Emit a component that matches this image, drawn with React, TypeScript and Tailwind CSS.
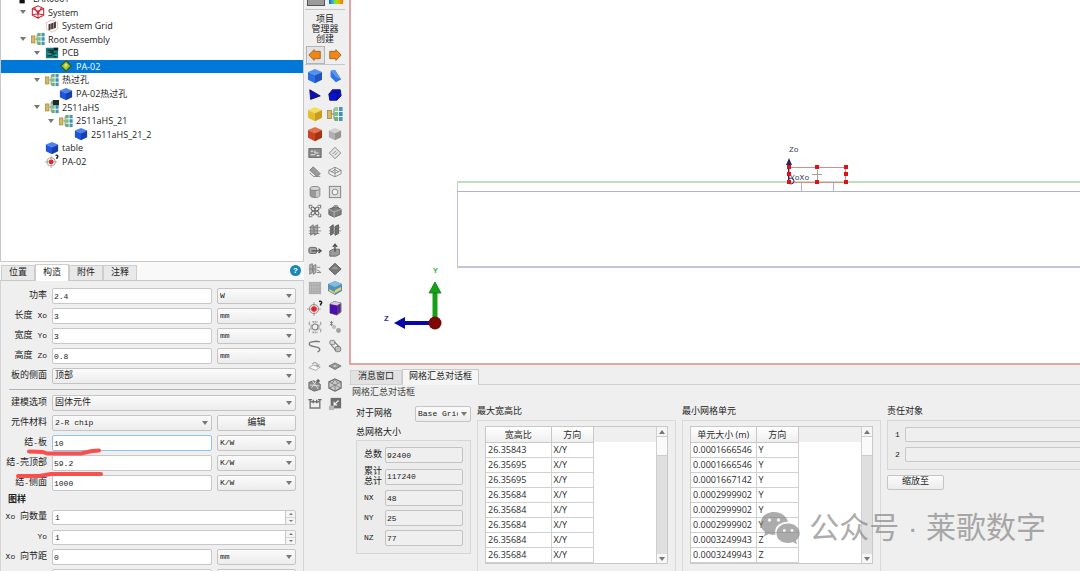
import React from 'react';

type IconProps = { className?: string };

const Svg = ({ children, className = 'w-3.5 h-3.5' }: { children: React.ReactNode; className?: string }) => (
  <svg viewBox="0 0 16 16" className={`shrink-0 ${className}`} fill="none" aria-hidden="true">
    {children}
  </svg>
);

/* ---------- icons ---------- */

const Cube = ({ top, left, right, className }: { top: string; left: string; right: string; className?: string }) => (
  <Svg className={className}>
    <path d="M8 1L15 4L8 7.2L1 4Z" fill={top} />
    <path d="M1 4L8 7.2V15.2L1 11.8Z" fill={left} />
    <path d="M15 4L8 7.2V15.2L15 11.8Z" fill={right} />
  </Svg>
);

const BlueCube = ({ className }: IconProps) => <Cube top="#4c83ee" left="#1f55d8" right="#163fae" className={className} />;

const AssemblyIcon = ({ className, muted, chip }: IconProps & { muted?: boolean; chip?: boolean }) => (
  <Svg className={className}>
    <rect x="0.5" y="4.5" width="4" height="8" fill="#d9b95c" stroke="#9d8540" strokeWidth="0.8" />
    <path d="M5 8H7M7 3V13M7 3H8M7 13H8" stroke="#5a8d6c" strokeWidth="1" />
    <rect x="7.5" y="1" width="3.6" height="4" fill={muted ? '#9fc79d' : '#6fae74'} />
    <rect x="7.5" y="6" width="3.6" height="4" fill="#82b98a" />
    <rect x="7.5" y="11" width="3.6" height="4" fill="#6fae74" />
    <rect x="12" y="1" width="3.6" height="4" fill="#4c94b8" />
    <rect x="12" y="6" width="3.6" height="4" fill="#3f8fb0" />
    <rect x="12" y="11" width="3.6" height="4" fill="#4c94b8" />
    {chip && <rect x="9" y="0" width="7" height="6" fill="#1d2b2b" />}
  </Svg>
);

const SystemIcon = () => (
  <Svg>
    <path d="M8 1L14.5 4V11.5L8 15L1.5 11.5V4ZM1.5 4L8 7L14.5 4M8 7V15M4 2.8L8 10L12 2.8M1.5 11.5L8 10L14.5 11.5" stroke="#cf2030" strokeWidth="1.2" />
  </Svg>
);

const GridIcon = () => (
  <Svg>
    <path d="M8 1L14.5 4V11.5L8 15L1.5 11.5V4Z" stroke="#efb4b4" strokeWidth="1" />
    <path d="M4 6L6.5 5V12L4 13ZM7 5L9.5 4V11L7 12ZM10 4L12.500 3V10L10 11Z" fill="#4a3a3a" />
  </Svg>
);

const PcbIcon = () => (
  <Svg>
    <rect x="1" y="2" width="14" height="12" fill="#167c80" />
    <path d="M3 5H7V8H4M9 4V9H13M3 11H8M10 12H13" stroke="#0b2f33" strokeWidth="1.6" />
    <rect x="10" y="2" width="5" height="3" fill="#0b2224" />
    <path d="M3 9H7M11 10.5H14" stroke="#53d0c6" />
  </Svg>
);

const ChipIcon = () => (
  <Svg>
    <path d="M8 2L14 8L8 14L2 8Z" fill="#9cc235" stroke="#365c1c" strokeWidth="1.4" />
    <path d="M7 10V6H9V8H7" stroke="#f3f08a" strokeWidth="1" />
  </Svg>
);

const MonitorIcon = ({ className }: IconProps) => (
  <Svg className={className}>
    <circle cx="7" cy="9" r="4.6" stroke="#a08c8c" strokeWidth="1" />
    <path d="M7 2V16M0 9H14" stroke="#a08c8c" strokeWidth="0.8" />
    <circle cx="7" cy="9" r="2.8" fill="#e0282b" />
    <path d="M12 1.5C14.5 0.5 15.5 3 13.6 4.2V5.6" stroke="#1d1d1d" strokeWidth="1.5" />
  </Svg>
);

const Arrow = ({ flip }: { flip?: boolean }) => (
  <Svg>
    <path
      d={flip ? 'M15 8L9 1.800V3.800H2V12.200H9V14.200Z' : 'M1 8L7 1.800V3.800H14V12.200H7V14.200Z'}
      fill="#f4860f"
      stroke="#8a6438"
      strokeWidth="1"
      strokeLinejoin="round"
    />
  </Svg>
);

const G = '#7b7b7b';
const L = '#a5a5a5';

const tools: { name: string; icon: React.ReactNode }[] = [
  { name: 'Block', icon: <Cube top="#4f93f2" left="#2d6fe0" right="#1e55c0" className="w-4 h-4" /> },
  { name: 'Prism', icon: <Svg><path d="M3 2L8 1L15 12L9 15L3 9Z" fill="#2f73e2" /><path d="M3 2L8 1L15 12L9 9Z" fill="#5a98f0" /></Svg> },
  { name: 'Wedge', icon: <Svg><path d="M2 2L14 9L3 13Z" fill="#0a10c0" stroke="#10124a" /></Svg> },
  { name: 'Polygon', icon: <Svg><path d="M5 2H14L15 9L10 14H2L1 7Z" fill="#0b12cf" stroke="#0a0d63" /><path d="M1 7L5 5H14M10 14L11 6" stroke="#0a0d63" strokeWidth="0.8" /></Svg> },
  { name: 'Enclosure', icon: <Cube top="#f5dc62" left="#e5bd2a" right="#c89c1d" className="w-4 h-4" /> },
  { name: 'Assembly', icon: <AssemblyIcon className="w-4 h-4" muted /> },
  { name: 'Source', icon: <Cube top="#e3714d" left="#c9431f" right="#a53416" className="w-4 h-4" /> },
  { name: 'Hollow block', icon: <Cube top="#d2d2d2" left="#b0b0b0" right="#969696" /> },
  { name: 'PCB', icon: <Svg><rect x="1" y="3" width="14" height="10" fill="#8b8b8b" stroke="#5f5f5f" /><path d="M3 6H6M8 5V8H12M3 10H8M10 11H13" stroke="#e8e8e8" strokeWidth="1.2" /></Svg> },
  { name: 'Component', icon: <Svg><path d="M8 1.5L14.5 8L8 14.5L1.5 8Z" fill="#e6e6e6" stroke={G} /><path d="M5.5 9L9 5.5M7.5 10.5L10.5 7.5" stroke={G} /></Svg> },
  { name: 'Plate', icon: <Svg><path d="M6 2L14 10L10 13L2 6Z" fill="#9a9a9a" stroke={G} /><path d="M2 9L6 13H14" stroke={G} /></Svg> },
  { name: 'Opening', icon: <Svg><path d="M1 6L8 2.5L15 6V10L8 13.5L1 10ZM1 6L8 9.5L15 6M4 8L8 5L12 8M8 2.5V13" stroke={G} strokeWidth="0.9" /></Svg> },
  { name: 'Cylinder', icon: <Svg><path d="M2.5 4V12C2.5 15 13.5 15 13.5 12V4" fill="#999" stroke={G} /><path d="M9 5H13V13L9 14Z" fill="#c6c6c6" /><ellipse cx="8" cy="4" rx="5.5" ry="2.3" fill="#d5d5d5" stroke={G} /></Svg> },
  { name: 'Vent', icon: <Svg><rect x="1.5" y="1.5" width="13" height="13" fill="#dcdcdc" stroke={G} /><circle cx="8" cy="8" r="3.3" fill="#f3f3f3" stroke={G} /></Svg> },
  {
    name: 'Fan',
    icon: (
      <Svg>
        <path d="M1.500 5V1.500H5M11 1.500H14.500V5M14.500 11V14.500H11M5 14.500H1.500V11" stroke={G} strokeWidth="1.2" />
        <path d="M8 8C4 8 2.500 6 4 3.500C7 3 8 5 8 8ZM8 8C8 4 10 2.500 12.500 4C13 7 11 8 8 8ZM8 8C12 8 13.500 10 12 12.500C9 13 8 11 8 8ZM8 8C8 12 6 13.500 3.500 12C3 9 5 8 8 8Z" stroke="#5f5f5f" strokeWidth="1.2" />
      </Svg>
    ),
  },
  { name: 'Blower', icon: <Svg><path d="M1 6L9 3L15 6V12L7 15L1 12Z" fill="#7f7f7f" stroke="#5f5f5f" /><path d="M1 6L7 9L15 6M7 9V15" stroke="#bcbcbc" /><path d="M5 6C5 1 12 0 12 5" stroke="#5f5f5f" /></Svg> },
  { name: 'Heat sink', icon: <Svg><path d="M3 4L6 2V12L3 14ZM7 4L11 2V12L7 14Z" fill="#a9a9a9" stroke={G} /><path d="M1 5H14M1 9H15M1 12H13" stroke={G} strokeWidth="0.9" /></Svg> },
  { name: 'Fins', icon: <Svg><path d="M3 4L6 2V12L3 14ZM8 4L12 2V12L8 14Z" fill="#6c6c6c" stroke="#555" /><path d="M1 5H14M1 9H15M1 12H13" stroke={G} strokeWidth="0.9" /></Svg> },
  { name: 'Pipe', icon: <Svg><rect x="1" y="5" width="9" height="7" rx="2" fill="#a4a4a4" stroke="#606060" /><path d="M4 9H14M12 6.5L15 9L12 11.5" stroke="#505050" strokeWidth="1.4" /></Svg> },
  { name: 'Flow', icon: <Svg><path d="M2 9L6 7H13V13L9 15H2Z" fill="#9a9a9a" stroke="#666" /><path d="M8 10V2M5.5 4.5L8 1.5L10.5 4.5" stroke="#505050" strokeWidth="1.5" /></Svg> },
  { name: 'Resistance', icon: <Svg><path d="M2 3L5 2V12L2 14ZM6 4L9 3V12L6 14Z" fill="#b5b5b5" stroke={G} /><path d="M10 6H14M10 9L14 11M10 12H15M1 8H8" stroke={G} /></Svg> },
  { name: 'Package', icon: <Svg><path d="M8 1.5L15 8L8 14.5L1 8Z" fill="#7a7a7a" stroke="#5c5c5c" /><path d="M4 8L8 4.5L12 8" fill="#999" /></Svg> },
  { name: 'Wall', icon: <Svg><rect x="1.5" y="1.5" width="13" height="13" fill="#b9b9b9" stroke="#a6a6a6" /><path d="M4 2V14M7 2V14M10 2V14M13 2V14M2 5H14M2 9H14M2 12H14" stroke="#a8a8a8" strokeWidth="0.7" /></Svg> },
  { name: 'Region', icon: <Svg className="w-4 h-4"><path d="M8 1L15 4V11L8 15L1 11V4Z" fill="#4e91be" /><path d="M1 4L8 1L15 4L8 7Z" fill="#82bddb" /><path d="M2 9L8 12V14L2 11Z" fill="#e8c34c" /><path d="M8 10L14 7V10L8 13Z" fill="#f0cd58" /></Svg> },
  { name: 'Monitor point', icon: <MonitorIcon className="w-4 h-4" /> },
  { name: 'Material', icon: <Svg className="w-4 h-4"><path d="M3 4L7 1.5L14 3V12L10 15L3 13Z" fill="#5b2b8c" stroke="#777" /><path d="M3 4L10 5.5V15L3 13Z" fill="#4a0fae" /><path d="M3 4L7 1.5L14 3L10 5.5Z" fill="#d4cbdc" /></Svg> },
  {
    name: 'Array',
    icon: (
      <Svg>
        <circle cx="8" cy="8" r="3.400" stroke={G} strokeWidth="1.2" />
        <path d="M5 2H11M5 14H11" stroke={L} strokeWidth="2" strokeDasharray="2 0.600" />
        <path d="M1.500 2V6M1.500 10V14M14.500 2V6M14.500 10V14M3.500 5V11M12.500 5V11" stroke={L} strokeWidth="1.4" />
      </Svg>
    ),
  },
  { name: 'Snap', icon: <Svg><path d="M2 2L6 6M6 2L2 6M4 1V7" stroke={G} /><circle cx="7" cy="8" r="2.4" fill="#bdbdbd" /><circle cx="12" cy="12" r="2.8" fill="#a0a0a0" /></Svg> },
  { name: 'Trace', icon: <Svg><path d="M13 3L9 2.500L3 3.500C0.500 4.500 1 7.500 4 8L11 9.500C14 10.500 14.500 13 11.500 14.500" stroke={G} strokeWidth="1.6" strokeLinecap="round" /></Svg> },
  { name: 'Link', icon: <Svg><rect x="2" y="1.500" width="6" height="5" rx="2" fill="#d5d5d5" stroke={G} /><rect x="8" y="8.500" width="6.500" height="6" rx="2" fill="#bebebe" stroke={G} /><path d="M3 6L9 13M7.500 3.500L13 9" stroke={G} strokeWidth="1.3" /></Svg> },
  { name: 'Sheet', icon: <Svg><path d="M1 10L6 7L14 9L9 13Z" fill="#f6f6f6" stroke={L} /><path d="M5 6C7 3 11 4 11 8M9 7L11 9L13 6" stroke={L} strokeWidth="1.3" /></Svg> },
  { name: 'Layer', icon: <Svg><path d="M1 8L8 4.5L15 8L8 12Z" fill="#929292" stroke="#777" /><path d="M5 8L8 6.5L11 8L8 9.5Z" fill="#c9c9c9" /></Svg> },
  { name: 'Assembly tools', icon: <Svg><path d="M1 5L6 3L14 7V13L7 15L1 12Z" fill="#8c8c8c" stroke="#666" /><path d="M4 2L12 13M11 2L4 11M2 8L13 9" stroke="#dedede" strokeWidth="1.1" /><circle cx="11.5" cy="3.5" r="2" fill="#666" /></Svg> },
  { name: 'Mesh box', icon: <Svg><path d="M8 1L15 4.5V11.5L8 15L1 11.5V4.5Z" fill="#c9c9c9" stroke="#666" strokeWidth="1.2" /><path d="M1 4.5L8 8L15 4.5M8 8V15M4.500 6.300L8 1.500L11.500 6.300M1.500 11.500L8 8L14.500 11.500" stroke="#777" strokeWidth="0.9" /></Svg> },
  { name: 'Network', icon: <Svg><path d="M2.500 3V12.500H13.500V3M2.500 5.500H13.500" stroke={G} strokeWidth="1.6" /><path d="M0.500 3H4.500M11.500 3H15.500M6 3V7M10 3V7" stroke="#666" strokeWidth="1.4" /></Svg> },
  { name: 'Fit', icon: <Svg><rect x="3" y="1" width="12" height="12" fill="#6e6e6e" /><rect x="1" y="10" width="6" height="5" fill="#b9b9b9" /><path d="M12 4L7 9M7 5.5V9H10.5" stroke="#f1f1f1" strokeWidth="1.4" /></Svg> },
];

/* ---------- tree ---------- */

const tree: { label: string; level: number; open?: boolean; selected?: boolean; icon: React.ReactNode }[] = [
  { label: 'LAK0001', level: 0, icon: <Svg><path d="M4 1H10V13H4Z" fill="#111" /></Svg> },
  { label: 'System', level: 1, open: true, icon: <SystemIcon /> },
  { label: 'System Grid', level: 2, icon: <GridIcon /> },
  { label: 'Root Assembly', level: 1, open: true, icon: <AssemblyIcon /> },
  { label: 'PCB', level: 2, open: true, icon: <PcbIcon /> },
  { label: 'PA-02', level: 3, selected: true, icon: <ChipIcon /> },
  { label: '热过孔', level: 2, open: true, icon: <AssemblyIcon /> },
  { label: 'PA-02热过孔', level: 3, icon: <BlueCube /> },
  { label: '2511aHS', level: 2, open: true, icon: <AssemblyIcon chip /> },
  { label: '2511aHS_21', level: 3, open: true, icon: <AssemblyIcon /> },
  { label: '2511aHS_21_2', level: 4, icon: <BlueCube /> },
  { label: 'table', level: 2, icon: <BlueCube /> },
  { label: 'PA-02', level: 2, icon: <MonitorIcon /> },
];

const indents = ['pl-[2px]', 'pl-[17px]', 'pl-[31px]', 'pl-[45px]', 'pl-[60px]'];

const ModelTree = () => (
  <div className="h-[262px] shrink-0 overflow-hidden border-x border-b border-[#c9c9c9] bg-white">
    <ul className="-mt-2 grid h-[176px] grid-rows-13 font-['Open_Sans','Noto_Sans_CJK_SC',sans-serif] text-[9px] leading-none text-[#1a1a1a]">
      {tree.map((n, i) => (
        <li key={i} className={`flex items-center whitespace-nowrap ${indents[n.level]} ${n.selected ? 'bg-[#0078d7] text-white' : ''}`}>
          <span className="flex w-[13px] shrink-0 items-center justify-start pl-[2px]">
            {n.open && <Triangle />}
          </span>
          {n.icon}
          <span className="pl-[3px]">{n.label}</span>
        </li>
      ))}
    </ul>
  </div>
);

const Triangle = ({ up }: { up?: boolean }) => (
  <svg viewBox="0 0 6 4" className="h-1 w-1.5 shrink-0" aria-hidden="true">
    <path d={up ? 'M0 4H6L3 0Z' : 'M0 0H6L3 4Z'} fill="#777" />
  </svg>
);

/* ---------- form controls ---------- */

const Combo = ({ value, label, id, className = '' }: { value: string; label: string; id?: string; className?: string }) => (
  <div className={`relative ${className}`}>
    <select
      id={id}
      aria-label={label}
      className={`block h-4 w-full appearance-none rounded-xs border border-[#c4c4c4] bg-linear-to-b from-[#fbfbfb] to-[#ececec] pr-3 pl-[2px] leading-[14px] ${/^[\x20-\x7e]+$/.test(value) ? 'text-[8px]' : ''}`}
    >
      <option>{value}</option>
    </select>
    <span className="pointer-events-none absolute inset-y-0 right-1 flex items-center">
      <Triangle />
    </span>
  </div>
);

// Latin parts run one size below the Chinese ones
const Mixed = ({ text }: { text: string }) => (
  <>
    {text.split(/([\x20-\x7e]+)/).filter(Boolean).map((part, i) => (
      <span key={i} className={/^[\x20-\x7e]+$/.test(part) ? 'text-[8px] whitespace-pre' : ''}>{part}</span>
    ))}
  </>
);

const unitField = 'w-[79px] shrink-0';

interface RowProps {
  label: string;
  value: string;
  unit?: string;
  kind?: 'text' | 'combo' | 'spin';
  focused?: boolean;
  button?: string;
}

const Row: React.FC<RowProps> = ({ label, value, unit, kind = 'text', focused, button }) => (
  <div className="flex h-5 items-center gap-[5px]">
    <label htmlFor={`f-${label}`} className="w-[46px] shrink-0 text-right leading-[11px] whitespace-nowrap"><Mixed text={label} /></label>
    {kind === 'combo' && <Combo id={`f-${label}`} value={value} label={label} className="min-w-0 flex-1" />}
    {kind === 'text' && (
      <input
        id={`f-${label}`}
        defaultValue={value}
        className={`h-4 min-w-0 flex-1 rounded-xs border bg-white px-px text-[8px] ${focused ? 'border-[#8cc4ea]' : 'border-[#c8c8c8]'}`}
      />
    )}
    {kind === 'spin' && (
      <div className="flex h-[15px] min-w-0 flex-1 rounded-xs border border-[#c8c8c8] bg-white">
        <input id={`f-${label}`} defaultValue={value} className="min-w-0 flex-1 px-[2px] text-[8px]" />
        <div className="flex w-[10px] flex-col border-l border-[#c8c8c8] bg-[#f4f4f4]">
          <button type="button" aria-label="增加" className="flex flex-1 items-center justify-center border-b border-[#d5d5d5]"><svg viewBox="0 0 4 2" className="h-[2px] w-1"><path d="M0 2H4L2 0Z" fill="#777" /></svg></button>
          <button type="button" aria-label="减少" className="flex flex-1 items-center justify-center"><svg viewBox="0 0 4 2" className="h-[2px] w-1"><path d="M0 0H4L2 2Z" fill="#777" /></svg></button>
        </div>
      </div>
    )}
    {unit !== undefined && <Combo value={unit} label={`${label} 单位`} className={unitField} />}
    {button && <button type="button" className={`${unitField} h-4 rounded-xs border border-[#c4c4c4] bg-linear-to-b from-[#fbfbfb] to-[#ececec] leading-[14px]`}>{button}</button>}
  </div>
);

const PropertyTabs = () => (
  <div className="flex h-[19px] shrink-0 items-end border-b border-[#c9c9c9] bg-[#f9f9f9] pl-px">
    {['位置', '构造', '附件', '注释'].map((t) => (
      <button
        key={t}
        className={`w-[34px] border-x border-t border-[#cdcdcd] leading-none ${t === '构造' ? '-mb-px h-[17px] bg-white' : 'h-[15px] bg-[#e9e9e9]'}`}
      >
        {t}
      </button>
    ))}
    <button aria-label="帮助" className="mr-[3px] mb-1 ml-auto flex h-[11px] w-[11px] items-center justify-center rounded-full bg-[#1787b5] text-[8px] leading-none font-bold text-white">
      ?
    </button>
  </div>
);

const PropertyForm = () => (
  <form className="relative min-h-0 flex-1 overflow-hidden border-x border-[#d4d4d4] pt-[5px] pr-[7px]">
    <Row label="功率" value="2.4" unit="W" />
    <Row label="长度 Xo" value="3" unit="mm" />
    <Row label="宽度 Yo" value="3" unit="mm" />
    <Row label="高度 Zo" value="0.8" unit="mm" />
    <Row label="板的侧面" value="顶部" kind="combo" />
    <div className="flex h-[7px] items-center pl-2"><hr className="w-full border-[#b5b5b5]" /></div>
    <Row label="建模选项" value="固体元件" kind="combo" />
    <Row label="元件材料" value="2-R chip" kind="combo" button="编辑" />
    <Row label="结-板" value="10" unit="K/W" focused />
    <Row label="结-壳顶部" value="59.2" unit="K/W" />
    <Row label="结-侧面" value="1000" unit="K/W" />
    <h3 className="flex h-3.5 items-center pl-[7px] font-bold">图样</h3>
    <Row label="Xo 向数量" value="1" kind="spin" />
    <Row label="Yo" value="1" kind="spin" />
    <Row label="Xo 向节距" value="0" unit="mm" />
    <Row label="" value="" unit="" />
    {/* hand-drawn underlines over the two junction resistances */}
    <svg className="pointer-events-none absolute top-0 left-0 h-[210px] w-[120px]" fill="none" stroke="#f7504f" strokeWidth="4" strokeLinecap="round" strokeLinejoin="round" aria-hidden="true">
      <path d="M28 170.500L42 171L46 172.500H80L91 170L98 169.500" />
      <path d="M17 195H38L50 193L100 193" />
    </svg>
  </form>
);

/* ---------- toolbar ---------- */

const Toolbar = () => (
  <div className="flex w-[41px] shrink-0 flex-col bg-[#efefef] pl-px">
    <div className="flex h-[10px] items-start justify-around border-b border-[#c6c6c6]">
      <button aria-label="线框" className="h-1.5 w-[18px] border-x border-b border-[#555] bg-[#9a9a9a]" />
      <button aria-label="着色" className="h-1 w-3.5 bg-linear-to-r from-blue-600 via-lime-400 to-orange-500" />
    </div>
    <div className="flex h-[35px] flex-col items-center justify-end text-center leading-[10px]">
      <span>项目</span>
      <span>管理器</span>
      <span>创建</span>
    </div>
    <div className="grid h-5 grid-cols-2 place-items-center border-b border-[#c6c6c6]">
      <button aria-label="后退" className="flex h-[18px] w-[19px] items-center justify-center border border-[#b4b4b4] bg-[#e4e4e4]"><Arrow /></button>
      <button aria-label="前进"><Arrow flip /></button>
    </div>
    <div className="mt-px grid h-[348px] grid-cols-2 grid-rows-18 place-items-center">
      {tools.map((t) => (
        <button key={t.name} aria-label={t.name}>{t.icon}</button>
      ))}
    </div>
  </div>
);

/* ---------- drawing view ---------- */

const handles = [[438, 167], [466, 167], [495, 167], [438, 174], [495, 174], [438, 182], [466, 182], [495, 182]];

const Viewport = () => (
  <div className="h-[365px] shrink-0 overflow-hidden border-b-2 border-l-2 border-[#e2a5a5] bg-white">
    <svg className="h-full w-full" fill="none" aria-label="模型视图">
      <g shapeRendering="crispEdges">
        <path d="M106.500 192V267" stroke="#c0c0de" />
        <path d="M106 267H2000" stroke="#c3c3de" strokeWidth="2" />
        <path d="M106 191.500H2000" stroke="#b0b0d6" />
        <path d="M106.500 191V183" stroke="#b5dab6" />
        <path d="M106 182H2000" stroke="#bfe0bf" strokeWidth="2" />
        <path d="M450.500 183V191M482.500 183V191" stroke="#b0b0d6" />
        <rect x="438.500" y="167.500" width="56" height="15" stroke="#d98a8a" />
        <path d="M461 174.500H471M466.500 170V180" stroke="#a0a590" />
      </g>
      <path d="M438 158L435 165H441Z" fill="#26265f" />
      <path d="M437.500 162V182" stroke="#26265f" />
      <circle cx="440" cy="181" r="3" stroke="#3c2f80" />
      {handles.map(([x, y]) => (
        <rect key={`${x}-${y}`} x={x - 2} y={y - 2} width="4" height="4" fill="#e01019" />
      ))}
      <g className="font-['Liberation_Mono',monospace] text-[8px]" fill="#3a3a5e">
        <text x="438" y="152">Zo</text>
        <text x="439" y="180">YoXo</text>
      </g>
      <path d="M84 318V292" stroke="#17a017" strokeWidth="5" />
      <path d="M84 282L78 293H90Z" fill="#14a314" stroke="#0b7a10" strokeWidth="0.8" />
      <path d="M78 323H52" stroke="#0808a8" strokeWidth="4" />
      <path d="M43 323L54 317V329Z" fill="#0808a8" />
      <circle cx="84" cy="323" r="6.500" fill="#7e0606" />
      <g className="font-['Liberation_Mono',monospace] text-[8px] font-bold">
        <text x="82" y="273" fill="#39b34a">Y</text>
        <text x="33" y="321" fill="#34349a">Z</text>
      </g>
    </svg>
  </div>
);

/* ---------- message dock ---------- */

const totals = [
  ['总数', '92400'],
  ['累计总计', '117240'],
  ['NX', '48'],
  ['NY', '25'],
  ['NZ', '77'],
];

const ratios = [
  ['26.35843', 'X/Y'], ['26.35695', 'X/Y'], ['26.35695', 'X/Y'], ['26.35684', 'X/Y'],
  ['26.35684', 'X/Y'], ['26.35684', 'X/Y'], ['26.35684', 'X/Y'], ['26.35684', 'X/Y'],
];

const cells = [
  ['0.0001666546', 'Y'], ['0.0001666546', 'Y'], ['0.0001667142', 'Y'], ['0.0002999902', 'Y'],
  ['0.0002999902', 'Y'], ['0.0002999902', 'Y'], ['0.0003249943', 'Z'], ['0.0003249943', 'Z'],
];

const DataTable = ({ heads, rows }: { heads: string[]; rows: string[][] }) => (
  <div className="flex h-[138px] overflow-hidden border border-[#c8c8c8] bg-white font-['Open_Sans','Noto_Sans_CJK_SC',sans-serif] text-[9px] leading-none text-[#2a2a2a]">
    <div className="min-w-0 flex-1 bg-linear-to-b from-[#efefef] from-[15px] to-white to-[15px]">
      <table className="w-[108px] table-fixed border-collapse bg-white">
        <thead>
          <tr className="h-[15px] bg-linear-to-b from-white to-[#efefef]">
            {heads.map((h, i) => (
              <th key={h} className={`border-r border-b border-[#c8c8c8] p-0 font-normal whitespace-nowrap ${i === 0 ? 'w-[65px]' : ''}`}>{h}</th>
            ))}
          </tr>
        </thead>
        <tbody>
          {rows.map((r, i) => (
            <tr key={i} className="h-[15px]">
              {r.map((c, j) => (
                <td key={j} className="border-r border-b border-[#d0d0d0] p-0 pl-[2px]">{c}</td>
              ))}
            </tr>
          ))}
        </tbody>
      </table>
    </div>
    <div className="flex w-[11px] shrink-0 flex-col border-l border-[#cfcfcf] bg-[#dfdfdf]">
      <button aria-label="向上" className="flex h-[9px] items-center justify-center bg-[#f6f6f6]"><Triangle up /></button>
      <div className="h-5 border-y border-[#cdcdcd] bg-[#fafafa]" />
      <button aria-label="向下" className="mt-auto flex h-[9px] items-center justify-center bg-[#f6f6f6]"><Triangle /></button>
    </div>
  </div>
);

const GroupTable = ({ title, heads, rows }: { title: string; heads: string[]; rows: string[][] }) => (
  <section className="flex w-[199px] shrink-0 flex-col">
    <h3 className="h-[15px] leading-[15px]">{title}</h3>
    <div className="flex-1 border-x border-t border-[#d9d9d9] px-[7px] pt-[5px]">
      <DataTable heads={heads} rows={rows} />
    </div>
  </section>
);

const GridSummary = () => (
  <div className="flex min-h-0 flex-1 gap-[6px] overflow-hidden pt-[3px] pl-[7px]">
    <section className="w-[115px] shrink-0 pt-px">
      <div className="mb-[5px] flex items-center justify-between">
        <span>对于网格</span>
        <Combo value="Base Grid" label="对于网格" className="w-14" />
      </div>
      <h3 className="h-[13px] leading-[13px]">总网格大小</h3>
      <div className="border border-[#d6d6d6] bg-[#ececec] px-[7px] pt-[4px] pb-[5px]">
        {totals.map(([k, v]) => (
          <div key={k} className={`flex items-center justify-between ${k === '累计总计' ? 'h-[23px]' : 'h-5'}`}>
            <label htmlFor={`t-${k}`} className="w-5 leading-[10px]"><Mixed text={k} /></label>
            <input id={`t-${k}`} readOnly defaultValue={v} className="h-4 w-[78px] rounded-xs border border-[#c3c3c3] bg-[#efefef] px-px text-[8px]" />
          </div>
        ))}
      </div>
    </section>
    <GroupTable title="最大宽高比" heads={['宽高比', '方向']} rows={ratios} />
    <GroupTable title="最小网格单元" heads={['单元大小 (m)', '方向']} rows={cells} />
    <section className="min-w-0 flex-1">
      <h3 className="h-[15px] leading-[15px]">责任对象</h3>
      <div className="mb-[5px] border-y border-l border-[#d6d6d6] bg-[#ececec] py-1 pl-[7px]">
        {['1', '2'].map((n) => (
          <div key={n} className="flex h-5 items-center gap-1 pb-px">
            <label htmlFor={`o-${n}`} className="w-1.5 text-[8px]">{n}</label>
            <input id={`o-${n}`} readOnly className="h-[15px] min-w-0 flex-1 rounded-l-xs border-y border-l border-[#c9c9c9] bg-[#efefef]" />
          </div>
        ))}
      </div>
      <button className="h-[15px] w-[57px] rounded-xs border border-[#c4c4c4] bg-linear-to-b from-[#fbfbfb] to-[#ececec] leading-[13px]">缩放至</button>
    </section>
  </div>
);

const Watermark = () => (
  <div className="pointer-events-none absolute right-[34px] bottom-[24px] flex items-center gap-[9px] font-['Liberation_Sans','Noto_Sans_CJK_SC',sans-serif] text-[30px] leading-[38px] text-[#808080] opacity-65">
    <svg viewBox="0 0 40 34" className="h-[34px] w-10" aria-hidden="true">
      <path d="M14 1C6.500 1 0.500 6 0.500 12.500C0.500 16 2.300 19 5.200 21.200L3.800 25.500L8.700 23C11 23.700 13 24 15.500 23.800C13.500 16 20 10.500 28 10.700C26.500 5 21 1 14 1Z" fill="currentColor" />
      <path d="M28 12.500C21 12.500 16.500 17 16.500 22.200C16.500 28 21.500 32 28 32C29.800 32 31.500 31.600 33 31L37 33.200L36 29.500C38.300 27.700 39.700 25.200 39.700 22.200C39.700 17 35 12.500 28 12.500Z" fill="currentColor" />
      <g fill="#f4f4f4">
        <circle cx="9.500" cy="9" r="1.700" />
        <circle cx="18.500" cy="9" r="1.700" />
        <circle cx="24.300" cy="19.500" r="1.400" />
        <circle cx="32" cy="19.500" r="1.400" />
      </g>
    </svg>
    <span>公众号 · 莱歌数字</span>
  </div>
);

export default function App() {
  return (
    <div className="relative flex h-screen w-full overflow-hidden bg-[#efefef] font-['Liberation_Mono','Noto_Sans_CJK_SC',monospace] text-[9px] leading-none text-[#222]">
      <aside className="flex w-[304px] shrink-0 flex-col">
        <ModelTree />
        <PropertyTabs />
        <PropertyForm />
      </aside>
      <Toolbar />
      <main className="flex min-w-0 flex-1 flex-col pl-1">
        <Viewport />
        <div className="flex h-5 shrink-0 items-end border-b border-[#d2d2d2] pl-px">
          <button className="h-[14px] w-[52px] border-x border-t border-[#d2d2d2] bg-[#e2e2e2] leading-none">消息窗口</button>
          <button className="-mb-px h-4 w-[77px] border-x border-t border-[#c9c9c9] bg-[#f5f5f5] leading-none">网格汇总对话框</button>
        </div>
        <h2 className="h-[17px] shrink-0 pl-[3px] leading-[17px] text-[#444]">网格汇总对话框</h2>
        <GridSummary />
      </main>
      <Watermark />
    </div>
  );
}
